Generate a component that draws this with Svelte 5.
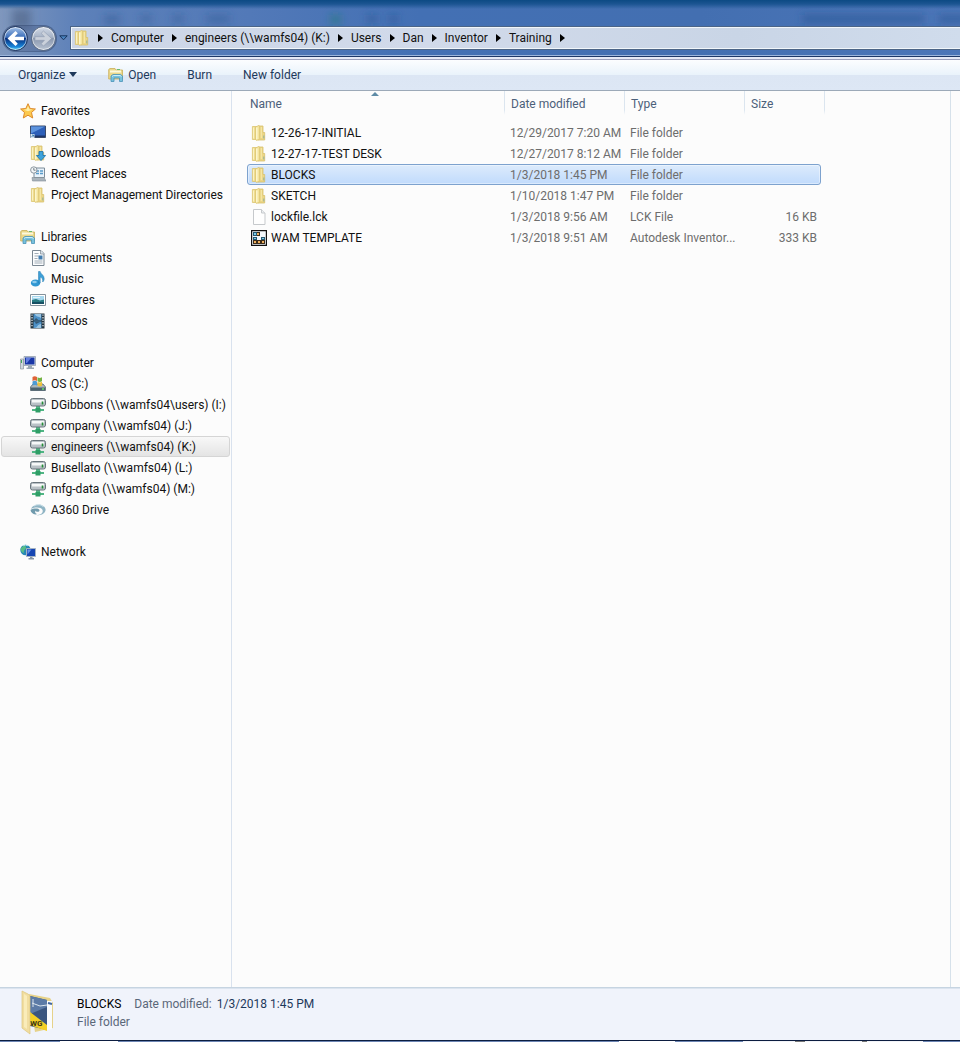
<script>
	const crumbs = ['Computer', 'engineers (\\\\wamfs04) (K:)', 'Users', 'Dan', 'Inventor', 'Training'];

	const groups = [
		{
			label: 'Favorites', icon: 'star',
			items: [
				{ label: 'Desktop', icon: 'desktop' },
				{ label: 'Downloads', icon: 'downloads' },
				{ label: 'Recent Places', icon: 'recent' },
				{ label: 'Project Management Directories', icon: 'folder' }
			]
		},
		{
			label: 'Libraries', icon: 'libraries',
			items: [
				{ label: 'Documents', icon: 'document' },
				{ label: 'Music', icon: 'music' },
				{ label: 'Pictures', icon: 'pictures' },
				{ label: 'Videos', icon: 'videos' }
			]
		},
		{
			label: 'Computer', icon: 'computer',
			items: [
				{ label: 'OS (C:)', icon: 'osdrive' },
				{ label: 'DGibbons (\\\\wamfs04\\users) (I:)', icon: 'netdrive' },
				{ label: 'company (\\\\wamfs04) (J:)', icon: 'netdrive' },
				{ label: 'engineers (\\\\wamfs04) (K:)', icon: 'netdrive' },
				{ label: 'Busellato (\\\\wamfs04) (L:)', icon: 'netdrive' },
				{ label: 'mfg-data (\\\\wamfs04) (M:)', icon: 'netdrive' },
				{ label: 'A360 Drive', icon: 'a360' }
			]
		},
		{ label: 'Network', icon: 'network', items: [] }
	];

	const files = [
		{ name: '12-26-17-INITIAL', date: '12/29/2017 7:20 AM', type: 'File folder', size: '', icon: 'folder' },
		{ name: '12-27-17-TEST DESK', date: '12/27/2017 8:12 AM', type: 'File folder', size: '', icon: 'folder' },
		{ name: 'BLOCKS', date: '1/3/2018 1:45 PM', type: 'File folder', size: '', icon: 'folder' },
		{ name: 'SKETCH', date: '1/10/2018 1:47 PM', type: 'File folder', size: '', icon: 'folder' },
		{ name: 'lockfile.lck', date: '1/3/2018 9:56 AM', type: 'LCK File', size: '16 KB', icon: 'file' },
		{ name: 'WAM TEMPLATE', date: '1/3/2018 9:51 AM', type: 'Autodesk Inventor...', size: '333 KB', icon: 'template' }
	];

	let location = $state('engineers (\\\\wamfs04) (K:)');
	let selectedName = $state('BLOCKS');
	let selected = $derived(files.find((f) => f.name === selectedName));
</script>

{#snippet icon(kind)}
	<svg class="icon" viewBox="0 0 16 16" width="16" height="16" aria-hidden="true">
		{#if kind === 'folder' || kind === 'downloads'}
			<path d="M1.400 1.500h4.600v13H1.400z" fill="#f0dd90" stroke="#dcc572" stroke-width=".8" />
			<path d="M7 1h5v6.500h1.700V15H7z" fill="#ecd685" stroke="#d8c06c" stroke-width=".8" />
			<path d="M4.500 2 7.600.6q1 0 1 1v11.900q0 .8-.8 1.100L5.500 15.600l-1-1z" fill="#f4e49c" stroke="#d9c270" stroke-width=".7" />
			<path d="M2.500 2.500v11" stroke="#faf2c4" /><path d="M5.800 2.500v11.500" stroke="#fdf8d4" stroke-width="1.300" />
			<path d="M10.300 2v11" stroke="#f7eaae" /><path d="M12.800 10.500v3" stroke="#86aca0" stroke-width=".9" />
			{#if kind === 'downloads'}
				<path d="M9 6.500h4v4h2.600L11 15.600 6.400 10.500H9z" fill="#3da3dc" stroke="#1b6ea8" stroke-width=".8" />
			{/if}
		{:else if kind === 'star'}
			<path d="m8 .7 2.200 4.800 5.200.5-3.900 3.500 1.200 5.500L8 12.200l-4.700 2.800 1.200-5.500L.6 6l5.200-.5z" fill="#fcc94e" stroke="#dd8a2c" />
			<path d="m8 3 1.400 3.300 3 .4-4.400 1.500-4.300-1.500 3-.4z" fill="#fff0ac" />
		{:else if kind === 'desktop'}
			<path d="M.5 2h15v11.500H.5z" fill="#2d5fb8" stroke="#3a4a68" />
			<path d="M1 2.500h14L1 9.500z" fill="#5c93dd" />
			<path d="M1 11.500h14V13H1z" fill="#1d3567" />
			<path d="M.5 10h4v4h-4z" fill="#d6e5f2" /><path d="m1.500 13 2-2m-1.500 0h1.500v1.500" stroke="#2b72a5" stroke-width=".8" fill="none" />
		{:else if kind === 'recent'}
			<path d="M4 2h10.500v9.500H4z" fill="#e8f2fa" stroke="#7d8c99" />
			<path d="M6 5h3M10 5h3M6 7.500h3M10 7.500h3" stroke="#579bc9" stroke-width="1.500" />
			<path d="M2 11.500h12l2 3.500H2.500z" fill="#aab4bc" stroke="#808b94" stroke-width=".6" />
			<circle cx="3.800" cy="4" r="3.200" fill="#f2f5f7" stroke="#8b969f" /><path d="M3.800 2v2.200h1.700" stroke="#596570" stroke-width=".8" fill="none" />
		{:else if kind === 'libraries'}
			<path d="M.7 2.500 2 1.500h5l1 1.500h6.500V12H.7z" fill="#ead88b" stroke="#c9ae58" stroke-width=".8" />
			<path d="M2 3.500h11v2H2z" fill="#fcf9dc" /><path d="M9 2.500h3" stroke="#6abb70" />
			<path d="M3 14.500V9l2-1.500h7.500l2 1.500v5.500h-3V11H6v3.500z" fill="#78c2dd" stroke="#4a93b8" stroke-width=".8" />
			<path d="M4 9.500 5.500 8.500h6.500l1.500 1" stroke="#c9edf7" fill="none" />
		{:else if kind === 'document'}
			<path d="M2.500.5h8.500l3 3v12H2.500z" fill="#fcfdfe" stroke="#7b8792" />
			<path d="M10.500.5v3.500H14" fill="#dce5ed" stroke="#7b8792" stroke-width=".7" />
			<path d="M4.500 3.500h4M4.500 6h4M4.500 8.500h3M4.500 11h8M4.500 13h8" stroke="#8b98a5" stroke-width=".8" />
			<path d="M8.500 5.500h4v4h-4z" fill="#427caf" />
		{:else if kind === 'music'}
			<ellipse cx="5.500" cy="12" rx="4.700" ry="3.500" fill="#3197d2" />
			<path d="M8.500 12V.5h1.700c.3 2.600 4.200 3.500 4 7.500-.1 1.500-.8 2.400-1.500 3 .5-3-1-4.500-2.500-5V12z" fill="#3d9fd7" stroke="#2178ae" stroke-width=".5" />
			<ellipse cx="4.500" cy="11" rx="2.300" ry="1.300" fill="#8dcbed" />
		{:else if kind === 'pictures'}
			<path d="M.5 2.500h15v11H.5z" fill="#fff" stroke="#84919b" />
			<path d="M2 4h12v8H2z" fill="#a6d7ee" /><path d="m2 8 4-1 4 1.500 4-1V12H2z" fill="#287b82" />
			<path d="M2 10h12v2H2z" fill="#164f63" /><path d="M3 5.500h7" stroke="#e5f5fb" />
		{:else if kind === 'videos'}
			<path d="M.5.500h14v15H.5z" fill="#25343e" />
			<path d="M3.500 1h8v6.500h-8zM3.500 8.500h8V15h-8z" fill="#4d91c7" />
			<path d="M5 1c0 3 4 2 6 4V1zM4 15c4 0 3-4 7-4v4z" fill="#99c4e2" />
			<path d="m6 5 3 2.500H4zM5 9h5l-4 2z" fill="#355974" />
			<path d="M2 1.500v13M13 1.500v13" stroke="#e4edf2" stroke-width="1.200" stroke-dasharray="1.300 1.300" />
		{:else if kind === 'computer'}
			<path d="M.5 4h3v10h-3z" fill="#cfd7dd" stroke="#89949e" stroke-width=".7" /><path d="M1.500 5v3" stroke="#42a75b" />
			<path d="M4 1.500h11.500v9H4z" fill="#d7e0e9" stroke="#8694a5" stroke-width=".7" />
			<path d="M5 2.500h9.500v7H5z" fill="#1937a7" /><path d="M6 3h5L7 8H6z" fill="#637ee0" />
			<path d="M8 11h4v1.500h2V14H6.500v-1.500H8z" fill="#9ba8b4" />
		{:else if kind === 'osdrive'}
			<path d="m3 8-2.500 3v3.500h15V11L13 8z" fill="#a9b5bb" stroke="#53636d" stroke-width=".8" />
			<path d="M1 11.500h14v3H1z" fill="#4c626e" /><path d="M12 13h2" stroke="#60de70" stroke-width="1.500" />
			<path d="M2.500 1q2.200-1.500 4.500 0v4q-2.300-1.500-4.500 0z" fill="#df6337" /><path d="M7.500 1.200q2.200 1.500 4.500 0v4q-2.300 1.500-4.500 0z" fill="#75b344" />
			<path d="M2.500 5.500q2.200-1.500 4.500 0v4q-2.300-1.500-4.500 0z" fill="#4c9bd5" /><path d="M7.500 5.700q2.200 1.500 4.500 0v4q-2.300 1.500-4.500 0z" fill="#edc13d" />
		{:else if kind === 'netdrive'}
			<path d="M6 9h4v3h4v2H2v-2h4z" fill="#4fb583" />
			<path d="M5.500 11h5v4.500h-5z" fill="#2f9e66" />
			<rect x=".5" y="1.500" width="15" height="7.500" rx="2" fill="#b9c1c6" stroke="#69757c" />
			<path d="M2 3h12v2.500H2z" fill="#f6f8f8" /><path d="M12.500 4.500v3" stroke="#248d36" stroke-width="1.600" />
		{:else if kind === 'a360'}
			<path d="M1 7c2-6 13-6 14.500 0 .8 4-4 7-9 6 4 0 7-2 6-5C11 5 5 5 1 7z" fill="#8fb4c4" />
			<path d="M.5 8c3-2 9-2 9 .5 0 2-4 1.500-4 0-1 2 0 3.500 2 3.500C4 13.500 1 11 .5 8z" fill="#719bad" />
			<path d="M4 4c3-2 8-1.500 9.500 1" stroke="#d5e7ef" fill="none" />
		{:else if kind === 'network'}
			<circle cx="5.500" cy="6" r="5.200" fill="#2687b5" /><path d="M1 4c3-3 5-3 5-.500S3 6 4 9C2 9 0 6 1 4z" fill="#58bd87" />
			<path d="M3 1.800q2.500-1.300 5 0" stroke="#b2e4eb" fill="none" />
			<path d="M6.500 4.500h9v8h-9z" fill="#1746b3" stroke="#a5b3c3" /><path d="M7.500 5.500h4l-4 5z" fill="#6390e6" />
			<path d="M10 13h2.500v1H14v1.500H8.500V14H10z" fill="#8796a6" />
		{:else if kind === 'file'}
			<path d="M2.500.5h8l3.500 3.500v11.500H2.500z" fill="#fefefe" stroke="#c6c9cc" /><path d="M10.500.5V4H14" fill="#eceff1" stroke="#c6c9cc" />
		{:else if kind === 'template'}
			<path d="M.6.600h14.800v14.800H.6z" fill="#f2f7fb" stroke="#111" stroke-width="1.200" />
			<path d="M2 2h4v4H2zM2 7h4v3H2zM10 7h4v3h-4z" fill="#24566f" />
			<path d="M6 2h3v4H6zM2 10h4v4H2zM6 10h4v4H6zM10 10h4v4h-4z" fill="#3d2c18" />
			<path d="M3 3h2v2H3zM3 8h2v1H3zM11 8h2v1h-2z" fill="#7ccbea" />
			<path d="M6 3h2v2H6zM3 11h2v2H3zM7 11h2v2H7zM11 11h2v2h-2z" fill="#f0b05e" />
		{/if}
	</svg>
{/snippet}

<div class="window">
	<header class="glass">
		<svg class="haze" aria-hidden="true">
			<defs><filter id="soft"><feGaussianBlur stdDeviation="4" /></filter></defs>
			<g filter="url(#soft)">
				<path d="M12 9h19v20H12z" fill="#4b5f82" opacity=".6" />
				<path d="M104 15h16v10h-16zM140 15h12v8h-12zM172 15h12v8h-12zM206 15h24v8h-24z" fill="#294f88" opacity=".4" />
				<path d="M330 15h11v9h-11z" fill="#207d75" opacity=".6" />
				<path d="M367 15h10v8h-10zM389 15h9v8h-9zM802 15h123v8H802zM938 15h30v8h-30z" fill="#24498a" opacity=".5" />
			</g>
		</svg>
		<div class="travel">
			<button class="round back" aria-label="Back">
				<svg viewBox="0 0 23 23" width="23" height="23"><path d="M11.500 4 3.500 11.500l8 7.500 2.300-2.300-3.200-3.400H20V9.700h-9.400l3.200-3.400z" fill="#fff" /></svg>
			</button>
			<button class="round forward" aria-label="Forward">
				<svg viewBox="0 0 23 23" width="23" height="23"><path d="m11.500 4 8 7.500-8 7.500-2.300-2.300 3.200-3.400H3V9.700h9.400L9.200 6.300z" fill="#cbd1db" stroke="#8f9bb0" stroke-width=".6" /></svg>
			</button>
		</div>
		<button class="recent" aria-label="Recent pages">
			<svg viewBox="0 0 9 6" width="9" height="6"><path d="M.8.800h7.400l-3.700 4z" fill="#4b83c0" stroke="#17365f" /></svg>
		</button>
		<nav class="address" aria-label="Address">
			{@render icon('folder')}
			{#each crumbs as crumb}
				<span class="arrow"></span>
				<button>{crumb}</button>
			{/each}
			<span class="arrow"></span>
		</nav>
	</header>

	<div class="toolbar">
		<button class="organize">Organize <span class="down"></span></button>
		<button class="open">{@render icon('libraries')}Open</button>
		<button>Burn</button>
		<button>New folder</button>
	</div>

	<div class="content">
		<nav class="tree" aria-label="Folders">
			{#each groups as group}
				<section>
					<a class="group" href="#{group.icon}">{@render icon(group.icon)}{group.label}</a>
					{#each group.items as item}
						<a
							href="#{item.icon}"
							class:current={item.label === location}
							onclick={() => (location = item.label)}
						>{@render icon(item.icon)}{item.label}</a>
					{/each}
				</section>
			{/each}
		</nav>

		<main>
			<table>
				<colgroup>
					<col class="c-name"><col class="c-date"><col class="c-type"><col class="c-size">
				</colgroup>
				<thead>
					<tr>
						<th class="sorted">Name</th>
						<th>Date modified</th>
						<th>Type</th>
						<th>Size</th>
					</tr>
				</thead>
				<tbody>
					{#each files as file}
						<tr class:selected={file.name === selectedName} onclick={() => (selectedName = file.name)}>
							<td><span class="name">{@render icon(file.icon)}{file.name}</span></td>
							<td>{file.date}</td>
							<td>{file.type}</td>
							<td class="size">{file.size}</td>
						</tr>
					{/each}
				</tbody>
			</table>
		</main>
		<aside></aside>
	</div>

	<footer class="details">
		<svg viewBox="0 0 36 48" width="36" height="48" aria-hidden="true">
			<path d="M9 5 30 9l3 5v25l-18 4z" fill="#e6d28a" />
			<path d="m10 7 17 4v30L10 37z" fill="#39557f" />
			<path d="m10 7 17 4v7L10 25z" fill="#5c7ba6" /><path d="m12 14 8 3 7-1M13 10v8" stroke="#dae5ed" fill="none" />
			<path d="m10 23 17 13v6l-17-6z" fill="#f3cf26" />
			<path d="M27 12h5v28l-5 1z" fill="#f9fbfd" /><path d="m28 14 4 1" stroke="#4066a0" stroke-width="2" />
			<text x="10" y="37" font-size="8" font-weight="700" fill="#393516">WG</text>
			<path d="m2 2 6 3q2 1 2 3v37l-8-6z" fill="#f1dda0" stroke="#dcc67c" stroke-width=".7" />
			<path d="m4 5 3 2v33l-3-2z" fill="#faecb9" />
		</svg>
		<dl>
			<div class="line">
				<dt class="title">{selected.name}</dt>
				<dd class="muted">Date modified:</dd>
				<dd class="value">{selected.date}</dd>
			</div>
			<dd class="muted">{selected.type}</dd>
		</dl>
	</footer>
	<div class="taskbar"></div>
</div>

<style>
	:global(body) {
		margin: 0;
		background: #fcfcfc;
	}

	.window {
		display: flex;
		flex-direction: column;
		min-height: 100vh;
		font-family: Roboto, "Open Sans", sans-serif;
		font-size: 12px;
		line-height: 16px;
		color: #111;
	}

	button {
		padding: 0;
		border: 0;
		background: none;
		font: inherit;
		color: inherit;
		white-space: nowrap;
	}

	a {
		color: inherit;
		text-decoration: none;
	}

	.icon {
		flex: none;
		display: block;
	}

	.glass {
		position: relative;
		display: flex;
		align-items: center;
		box-sizing: border-box;
		height: 57px;
		padding: 20px 0 0 3px;
		border-bottom: 1px solid #1d3767;
		box-shadow: inset 0 -1px #9db6dc;
		background: linear-gradient(#0c4a84, #1c5592 4px, transparent 9px),
			linear-gradient(90deg, #7f97bd, #5c80b9 80px, #5279b8 250px, #4370b4 420px, #436fb1 700px, #4c76b8);
	}

	.haze {
		position: absolute;
		top: 0;
		left: 0;
		width: 100%;
		height: 32px;
	}

	.travel {
		position: relative;
		display: flex;
		gap: 3px;
		border-radius: 14px;
		background: rgba(55, 75, 120, 0.3);
		box-shadow: 0 0 0 1px rgba(45, 65, 105, 0.5);
	}

	.round {
		width: 25px;
		height: 25px;
		border: 1px solid #20365f;
		border-radius: 50%;
		box-shadow: inset 0 0 0 1px rgba(255, 255, 255, 0.6);
	}

	.round svg {
		display: block;
	}

	.back {
		background: linear-gradient(#a7c4e9, #386bb8 45%, #062d7c 50%, #1783d8 85%, #58d3f5);
	}

	.forward {
		border-color: #596982;
		background: linear-gradient(#d4dbe7, #a4b1c5 45%, #8a98af 50%, #b9c3d2);
	}

	.recent {
		display: flex;
		width: 9px;
		margin: 0 3px;
	}

	.address {
		position: relative;
		flex: 1;
		display: flex;
		align-items: center;
		gap: 8px;
		height: 20px;
		padding-left: 2px;
		border: 1px solid #f1f6fa;
		border-right: 0;
		outline: 1px solid #4c6587;
		background: linear-gradient(90deg, #ccd6e7, #d1daea 40%, #c9d5e6 75%, #d0dcec);
	}

	.arrow {
		border: solid transparent;
		border-width: 4px 0 4px 5px;
		border-left-color: #000;
	}

	.toolbar {
		display: flex;
		align-items: center;
		gap: 31px;
		box-sizing: border-box;
		height: 34px;
		padding-left: 18px;
		border-top: 2px solid #e5e9f6;
		border-bottom: 1px solid #9ca9b8;
		box-shadow: inset 0 1px #9b9fbb;
		background: linear-gradient(#fdfeff, #eaf3fb 50%, #dce6f4 51%, #dde7f5);
		color: #1e395b;
	}

	.toolbar button {
		display: flex;
		align-items: center;
		gap: 4px;
	}

	.down {
		border: solid transparent;
		border-width: 5px 4px 0;
		border-top-color: #1e395b;
	}

	.content {
		flex: 1;
		display: flex;
		background: #fcfcfc;
	}

	.tree {
		flex: none;
		display: flex;
		flex-direction: column;
		gap: 21px;
		box-sizing: border-box;
		width: 232px;
		padding: 9px 1px 0;
		border-right: 1px solid #d9e2ee;
	}

	.tree a {
		display: flex;
		align-items: center;
		gap: 5px;
		box-sizing: border-box;
		height: 21px;
		padding-left: 28px;
		border: 1px solid transparent;
		border-radius: 3px;
		white-space: nowrap;
	}

	.tree a.group {
		padding-left: 18px;
	}

	.tree a.current {
		border-color: #d5d5d5;
		background: linear-gradient(#f8f8f8, #e4e4e4);
	}

	main {
		flex: 1;
		padding-left: 15px;
	}

	aside {
		width: 9px;
		border-left: 1px solid #d6e1ea;
	}

	table {
		width: 578px;
		table-layout: fixed;
		border-collapse: separate;
		border-spacing: 0;
	}

	.c-name {
		width: 258px;
	}

	.c-date,
	.c-type {
		width: 120px;
	}

	.c-size {
		width: 80px;
	}

	th {
		position: relative;
		height: 26px;
		padding: 0 0 5px 6px;
		border-right: 1px solid;
		border-image: linear-gradient(#dbe5ef 60%, transparent 75%) 1;
		font-weight: 400;
		text-align: left;
		color: #4c607a;
	}

	th:first-child {
		padding-left: 3px;
	}

	.sorted::after {
		content: "";
		position: absolute;
		top: 1px;
		left: 50%;
		margin-left: -5px;
		border: solid transparent;
		border-width: 0 4px 4px;
		border-bottom-color: #5e8ba6;
	}

	tbody tr {
		position: relative;
	}

	td {
		height: 21px;
		padding: 0 0 0 5px;
		color: #6d6d6d;
		white-space: nowrap;
	}

	td:first-child {
		padding-left: 4px;
	}

	.name {
		display: flex;
		align-items: center;
		gap: 4px;
		color: #111;
	}

	td.size {
		padding-right: 8px;
		text-align: right;
	}

	/* highlight stops short of the last column divider */
	.selected td:first-child::before {
		content: "";
		position: absolute;
		z-index: -1;
		inset: 0 4px 0 0;
		box-sizing: border-box;
		border: 1px solid #7da2ce;
		border-radius: 3px;
		box-shadow: inset 0 0 0 1px rgba(255, 255, 255, 0.4);
		background: linear-gradient(#dcebfc, #c1dbfc);
	}

	tbody tr.selected {
		z-index: 0;
	}

	.details {
		display: flex;
		align-items: center;
		gap: 21px;
		box-sizing: border-box;
		height: 53px;
		padding: 0 20px 2px;
		border-top: 1px solid #c6d4e1;
		box-shadow: inset 0 1px #dbe4ef;
		background: #f0f3fb;
	}

	dl,
	dd {
		margin: 0;
	}

	dl {
		display: grid;
		gap: 2px;
	}

	.line {
		display: flex;
		gap: 5px;
	}

	.title {
		margin-right: 8px;
		color: #000;
	}

	.muted {
		color: #5a6779;
	}

	.value {
		color: #1e395b;
	}

	.taskbar {
		height: 1px;
		border-top: 1px solid #0c1d40;
		background: linear-gradient(90deg, #6d86b4 60px, #fff 60px 118px, #6d86b4 118px 619px, #fff 619px 675px, #6d86b4 675px 743px, #f2f4f8 743px 795px, #777 795px 805px, #f2f4f8 805px 862px, #777 862px 867px, #f2f4f8 867px 923px, #6d86b4 923px);
	}
</style>
